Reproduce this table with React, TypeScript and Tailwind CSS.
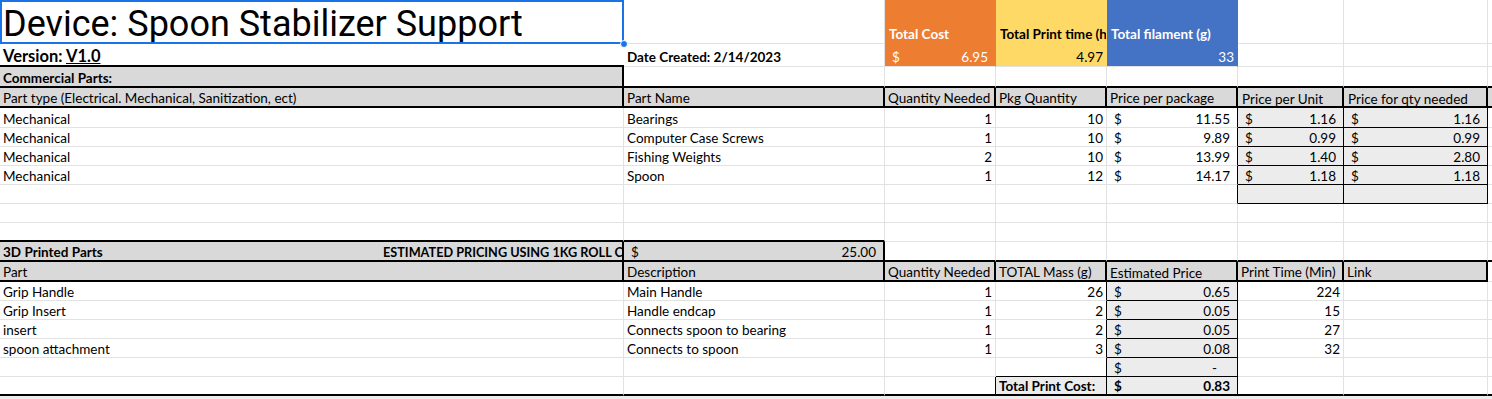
import type { ReactNode } from 'react';

const GR = 'border-r border-r-[#e2e2e2]';
const GB = 'border-b border-b-[#e2e2e2]';
const R1 = 'border-r border-r-black';
const B1 = 'border-b border-b-black';
const R2 = 'border-r-2 border-r-black';
const B2 = 'border-b-2 border-b-black';

type CellProps = { children?: ReactNode; className?: string; r?: string; b?: string };

function Cell({ children, className = '', r = GR, b = GB }: CellProps) {
  return (
    <div className={`flex items-end overflow-hidden whitespace-nowrap leading-[16px] ${r} ${b} ${className}`}>
      {children}
    </div>
  );
}

// accounting format: "$" on the left, value on the right
function Money({ value, bold = false, dash = false }: { value: string; bold?: boolean; dash?: boolean }) {
  return (
    <div className={`flex w-full justify-between pl-[7px] ${dash ? 'pr-[20px]' : 'pr-[7px]'} ${bold ? 'font-bold' : ''}`}>
      <span>$</span>
      <span>{value}</span>
    </div>
  );
}

const commercial = [
  { type: 'Mechanical', name: 'Bearings', qty: '1', pkg: '10', price: '11.55', unit: '1.16', total: '1.16' },
  { type: 'Mechanical', name: 'Computer Case Screws', qty: '1', pkg: '10', price: '9.89', unit: '0.99', total: '0.99' },
  { type: 'Mechanical', name: 'Fishing Weights', qty: '2', pkg: '10', price: '13.99', unit: '1.40', total: '2.80' },
  { type: 'Mechanical', name: 'Spoon', qty: '1', pkg: '12', price: '14.17', unit: '1.18', total: '1.18' },
];

const printed = [
  { part: 'Grip Handle', desc: 'Main Handle', qty: '1', mass: '26', price: '0.65', time: '224' },
  { part: 'Grip Insert', desc: 'Handle endcap', qty: '1', mass: '2', price: '0.05', time: '15' },
  { part: 'insert', desc: 'Connects spoon to bearing', qty: '1', mass: '2', price: '0.05', time: '27' },
  { part: 'spoon attachment', desc: 'Connects to spoon', qty: '1', mass: '3', price: '0.08', time: '32' },
];

const hdr = 'bg-[#d9d9d9] pl-[3px]';
const boxed = 'bg-[#ececec]';

export default function App() {
  return (
    <div className="h-[399px] w-[1492px] overflow-hidden bg-white font-['Lato',sans-serif] text-[13.5px] text-black">
      <div className="grid grid-cols-[624px_261px_111px_111px_131px_106px_144px_1fr] grid-rows-[44px_23px_21px_20px_20px_19px_19px_19px_19px_19px_19px_20px_20px_19px_19px_19px_19px_19px_19px_3px]">
        {/* row 1 */}
        <div className="relative flex items-end pb-[1px] pl-[3px]">
          <span className="font-['Roboto',sans-serif] text-[36px] leading-[38px]">Device: Spoon Stabilizer Support</span>
          <div className="pointer-events-none absolute inset-0 border-2 border-[#1a73e8]" />
          <div className="absolute -bottom-[4px] -right-[4px] z-10 h-[8px] w-[8px] rounded-full border border-white bg-[#1a73e8]" />
        </div>
        <Cell />
        <Cell className="bg-[#ed7d31] pb-[1px] pl-[4px] font-bold text-white" r="border-r border-r-[#ed7d31]" b="border-b border-b-[#ed7d31]">Total Cost</Cell>
        <Cell className="bg-[#ffd966] pb-[1px] pl-[4px] font-bold" r="border-r border-r-[#ffd966]" b="border-b border-b-[#ffd966]">Total Print time (hrs)</Cell>
        <Cell className="bg-[#4472c4] pb-[1px] pl-[4px] font-bold text-white" r="border-r border-r-[#4472c4]" b="border-b border-b-[#4472c4]">Total filament (g)</Cell>
        <Cell />
        <Cell />
        <Cell r="" />

        {/* row 2 */}
        <Cell className="pl-[3px] text-[16.5px] font-bold" r="" b={B2}>
          <span className="leading-[18px]">
            Version: <span className="underline">V1.0</span>
          </span>
        </Cell>
        <Cell className="pl-[3px] pb-[1px] font-bold">Date Created: 2/14/2023</Cell>
        <Cell className="bg-[#ed7d31] pb-[1px] text-white" r="border-r border-r-[#ed7d31]">
          <Money value="6.95" />
        </Cell>
        <Cell className="bg-[#ffd966] pb-[1px] pr-[3px] justify-end" r="border-r border-r-[#ffd966]">4.97</Cell>
        <Cell className="bg-[#4472c4] pb-[1px] pr-[3px] justify-end text-white" r="border-r border-r-[#4472c4]">33</Cell>
        <Cell />
        <Cell />
        <Cell r="" />

        {/* row 3 */}
        <Cell className={`${hdr} font-bold`} r={R2} b={B2}>Commercial Parts:</Cell>
        <Cell b={B2} />
        <Cell b={B2} />
        <Cell b={B2} />
        <Cell b={B2} />
        <Cell b={B2} />
        <Cell b={B2} />
        <Cell r="" b={B2} />

        {/* row 4 */}
        <Cell className={hdr} r={R2} b={B2}>Part type (Electrical. Mechanical, Sanitization, ect)</Cell>
        <Cell className={hdr} r={R2} b={B2}>Part Name</Cell>
        <Cell className={hdr} r={R2} b={B2}>Quantity Needed</Cell>
        <Cell className={hdr} r={R2} b={B2}>Pkg Quantity</Cell>
        <Cell className={hdr} r={R2} b={B2}>Price per package</Cell>
        <Cell className={`${hdr} pl-[4px]`} r={R2} b={B2}>
          <span className="translate-y-[1px]">Price per Unit</span>
        </Cell>
        <Cell className={`${hdr} pl-[4px]`} r={R2} b={B2}>
          <span className="translate-y-[1px]">Price for qty needed</span>
        </Cell>
        <Cell className="bg-[#d9d9d9]" r="" b={B2} />

        {/* rows 5-8 */}
        {commercial.map((c) => (
          <div key={c.name} className="contents">
            <Cell className="pl-[3px]">{c.type}</Cell>
            <Cell className="pl-[3px]">{c.name}</Cell>
            <Cell className="justify-end pr-[3px]">{c.qty}</Cell>
            <Cell className="justify-end pr-[3px]">{c.pkg}</Cell>
            <Cell r={R1}>
              <Money value={c.price} />
            </Cell>
            <Cell className={boxed} r={R1} b={B1}>
              <Money value={c.unit} />
            </Cell>
            <Cell className={boxed} r={R1} b={B1}>
              <Money value={c.total} />
            </Cell>
            <Cell r="" />
          </div>
        ))}

        {/* row 9 */}
        <Cell />
        <Cell />
        <Cell />
        <Cell />
        <Cell r={R1} />
        <Cell className={boxed} r={R1} b={B1} />
        <Cell className={boxed} r={R1} b={B1} />
        <Cell r="" />

        {/* row 10 */}
        <Cell />
        <Cell />
        <Cell />
        <Cell />
        <Cell />
        <Cell />
        <Cell />
        <Cell r="" />

        {/* row 11 */}
        <Cell b={B2} />
        <Cell b={B2} />
        <Cell />
        <Cell />
        <Cell />
        <Cell />
        <Cell />
        <Cell r="" />

        {/* row 12 */}
        <Cell className={`${hdr} font-bold`} r={R2} b={B2}>
          <span className="w-[380px] shrink-0">3D Printed Parts</span>
          <span className="text-[12.7px]">ESTIMATED PRICING USING 1KG ROLL COST</span>
        </Cell>
        <Cell className="bg-[#d9d9d9]" r={R2} b={B2}>
          <Money value="25.00" />
        </Cell>
        <Cell b={B2} />
        <Cell b={B2} />
        <Cell b={B2} />
        <Cell b={B2} />
        <Cell b={B2} />
        <Cell r="" b={B2} />

        {/* row 13 */}
        <Cell className={hdr} r={R2} b={B2}>Part</Cell>
        <Cell className={hdr} r={R2} b={B2}>Description</Cell>
        <Cell className={hdr} r={R2} b={B2}>Quantity Needed</Cell>
        <Cell className={hdr} r={R2} b={B2}>TOTAL Mass (g)</Cell>
        <Cell className={hdr} r={R2} b={B2}>
          <span className="translate-y-[1px]">Estimated Price</span>
        </Cell>
        <Cell className={hdr} r={R2} b={B2}>Print Time (Min)</Cell>
        <Cell className={hdr} r={R2} b={B2}>Link</Cell>
        <Cell r="" />

        {/* rows 14-17 */}
        {printed.map((p) => (
          <div key={p.part} className="contents">
            <Cell className="pl-[3px]">{p.part}</Cell>
            <Cell className="pl-[3px]">{p.desc}</Cell>
            <Cell className="justify-end pr-[3px]">{p.qty}</Cell>
            <Cell className="justify-end pr-[3px]" r={R1}>{p.mass}</Cell>
            <Cell className={boxed} r={R1} b={B1}>
              <Money value={p.price} />
            </Cell>
            <Cell className="justify-end pr-[3px]">{p.time}</Cell>
            <Cell />
            <Cell r="" />
          </div>
        ))}

        {/* row 18 */}
        <Cell />
        <Cell />
        <Cell />
        <Cell r={R1} b={B1} />
        <Cell className={boxed} r={R1} b={B1}>
          <Money value="-" dash />
        </Cell>
        <Cell />
        <Cell />
        <Cell r="" />

        {/* row 19 */}
        <Cell b={B2} />
        <Cell b={B2} />
        <Cell r={R1} b={B2} />
        <Cell className={`${boxed} pl-[3px] font-bold`} r={R1} b={B2}>Total Print Cost:</Cell>
        <Cell className={boxed} r={R1} b={B2}>
          <Money value="0.83" bold />
        </Cell>
        <Cell b={B2} />
        <Cell b={B2} />
        <Cell r="" b={B2} />

        {/* row 20 (cut off) */}
        <div className="col-span-8 bg-[#ececec]" />
      </div>
    </div>
  );
}
